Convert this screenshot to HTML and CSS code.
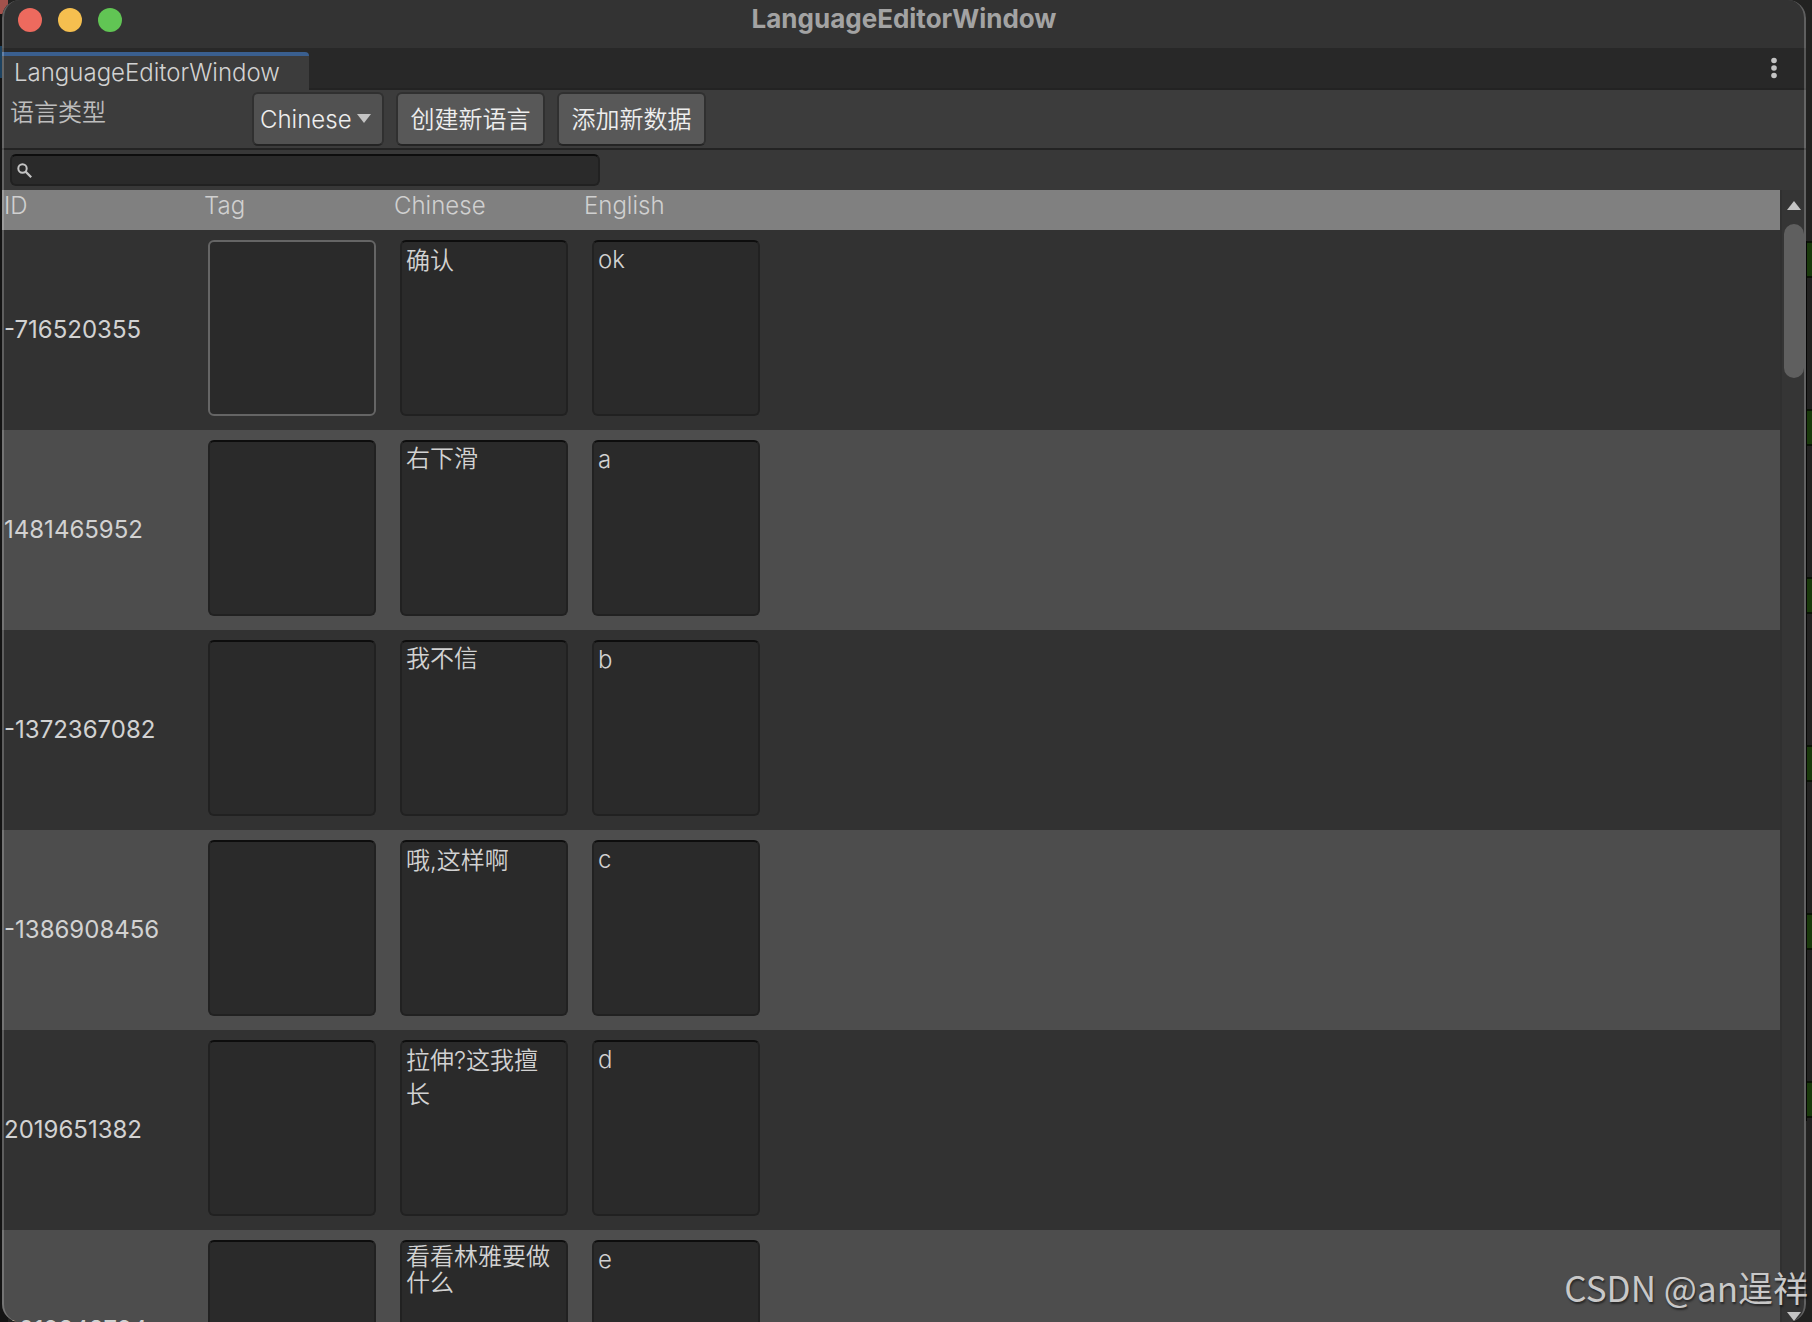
FILE: index.html
```html
<!DOCTYPE html>
<html lang="zh-CN">

<head>
    <meta charset="UTF-8">
    <meta name="viewport" content="width=device-width, initial-scale=1.0">
    <title>LanguageEditorWindow</title>
    <link rel="stylesheet" href="styles.css">
</head>

<body>
    <div class="window">
        <header class="title-bar">
            <div class="lights">
                <span class="light red"></span>
                <span class="light yellow"></span>
                <span class="light green"></span>
            </div>
            <h1>LanguageEditorWindow</h1>
        </header>

        <nav class="tab-bar">
            <button class="tab" type="button">LanguageEditorWindow</button>
            <button class="menu" type="button" aria-label="Menu">
                <svg width="6" height="22" viewBox="0 0 6 22" fill="#c4c4c4">
                    <circle cx="3" cy="3.5" r="2.8" />
                    <circle cx="3" cy="11" r="2.8" />
                    <circle cx="3" cy="18.5" r="2.8" />
                </svg>
            </button>
        </nav>

        <div class="toolbar">
            <label class="toolbar-label" for="language">语言类型</label>
            <div class="dropdown">
                <select id="language">
                    <option>Chinese</option>
                    <option>English</option>
                </select>
                <svg class="arrow" width="14" height="9" viewBox="0 0 14 9" fill="#c4c4c4">
                    <path d="M0 0h14L7 9z" />
                </svg>
            </div>
            <button class="button" type="button">创建新语言</button>
            <button class="button" type="button">添加新数据</button>
        </div>

        <div class="search-bar">
            <label class="search">
                <svg width="16" height="16" viewBox="0 0 16 16" fill="none" stroke="#c4c4c4" stroke-width="2">
                    <circle cx="5.5" cy="6.5" r="4.2" />
                    <path d="M8.6 9.6L14.2 15.2" stroke-width="2.2" />
                </svg>
                <input type="text" aria-label="Search">
            </label>
        </div>

        <main class="content">
            <table>
                <thead>
                    <tr><th class="id">ID</th><th>Tag</th><th>Chinese</th><th>English</th></tr>
                </thead>
                <tbody>
                    <tr>
                        <td class="id">-716520355</td>
                        <td><textarea class="active" aria-label="Tag"></textarea></td>
                        <td><textarea class="tall" aria-label="Chinese">确认</textarea></td>
                        <td><textarea aria-label="English">ok</textarea></td>
                    </tr>
                    <tr>
                        <td class="id">1481465952</td>
                        <td><textarea aria-label="Tag"></textarea></td>
                        <td><textarea class="medium" aria-label="Chinese">右下滑</textarea></td>
                        <td><textarea aria-label="English">a</textarea></td>
                    </tr>
                    <tr>
                        <td class="id">-1372367082</td>
                        <td><textarea aria-label="Tag"></textarea></td>
                        <td><textarea class="medium" aria-label="Chinese">我不信</textarea></td>
                        <td><textarea aria-label="English">b</textarea></td>
                    </tr>
                    <tr>
                        <td class="id">-1386908456</td>
                        <td><textarea aria-label="Tag"></textarea></td>
                        <td><textarea class="tall" aria-label="Chinese">哦,这样啊</textarea></td>
                        <td><textarea aria-label="English">c</textarea></td>
                    </tr>
                    <tr>
                        <td class="id">2019651382</td>
                        <td><textarea aria-label="Tag"></textarea></td>
                        <td><textarea class="tall" aria-label="Chinese">拉伸?这我擅长</textarea></td>
                        <td><textarea aria-label="English">d</textarea></td>
                    </tr>
                    <tr>
                        <td class="id">2019348794</td>
                        <td><textarea aria-label="Tag"></textarea></td>
                        <td><textarea class="compact" aria-label="Chinese">看看林雅要做什么</textarea></td>
                        <td><textarea aria-label="English">e</textarea></td>
                    </tr>
                </tbody>
            </table>
            <div class="scrollbar">
                <svg width="14" height="9" viewBox="0 0 14 9" fill="#c4c4c4">
                    <path d="M0 9h14L7 0z" />
                </svg>
                <div class="thumb"></div>
                <svg class="down" width="14" height="9" viewBox="0 0 14 9" fill="#c4c4c4">
                    <path d="M0 0h14L7 9z" />
                </svg>
            </div>
        </main>
    </div>
    <div class="backdrop"></div>

    <p class="watermark">CSDN @an逞祥</p>
</body>

</html>
```

FILE: styles.css
```css
* {
    box-sizing: border-box;
}

body {
    display: flex;
    height: 100vh;
    margin: 0;
    padding-left: 2px;
    overflow: hidden;
    background: linear-gradient(#a3524c 14px, #141414 14px 46px, #1d4260 46px 78px, #141414 78px) left / 8px 100% no-repeat #222221;
    color: #d2d2d2;
    font-family: Inter, "Noto Sans CJK SC", sans-serif;
    font-size: 24px;
    font-weight: 350;
}

button,
select,
input,
textarea {
    color: inherit;
    font: inherit;
}

.window {
    position: relative;
    display: flex;
    flex: 1;
    flex-direction: column;
    overflow: hidden;
    border-radius: 18px;
    background-color: #383838;
}

/* light rim over the window edge */
.window::after {
    content: "";
    position: absolute;
    inset: 0;
    border: solid rgba(255, 255, 255, 0.22);
    border-width: 0 2px;
    border-radius: 18px;
    pointer-events: none;
}

/* strip of the window behind */
.backdrop {
    width: 6px;
    height: 880px;
    margin-top: 241px;
    border-left: 1px solid #050505;
    background: linear-gradient(#0b1407 2px, #1a3a0c 2px 35px, #0b1407 35px 37px, transparent 37px) 0 0 / 5px 168px repeat-y;
}

.title-bar {
    display: grid;
    grid-template-columns: 1fr auto 1fr;
    height: 48px;
    padding: 0 16px 8px;
    align-items: center;
    background-color: #333333;
}

.title-bar h1 {
    margin: 0;
    padding-bottom: 2px;
    color: #a3a3a3;
    font-size: 26px;
    font-weight: 700;
    line-height: 30px;
}

.lights {
    display: flex;
    gap: 16px;
}

.light {
    width: 24px;
    height: 24px;
    border-radius: 50%;
}

.red {
    background-color: #ed6a5e;
}

.yellow {
    background-color: #f5bf4f;
}

.green {
    background-color: #61c554;
}

.tab-bar {
    display: flex;
    height: 42px;
    padding-top: 4px;
    justify-content: space-between;
    background-color: #282828;
    box-shadow: inset 0 -2px #232323;
}

.tab {
    width: 307px;
    padding: 0 12px 2px;
    border: none;
    border-top: 4px solid #3a5f8f;
    border-radius: 0 4px 0 0;
    background-color: #3c3c3c;
    text-align: left;
}

.menu {
    padding: 0 29px 6px;
    border: none;
    background: none;
}

.menu svg {
    display: block;
}

.toolbar {
    display: flex;
    height: 60px;
    padding: 2px 8px;
    gap: 12px;
    border-bottom: 2px solid #232323;
    background-color: #3c3c3c;
}

.toolbar-label {
    width: 230px;
    color: #bdbdbd;
    line-height: 42px;
}

.dropdown {
    position: relative;
}

.dropdown select,
.button {
    height: 54px;
    border: 2px solid #303030;
    border-bottom-color: #242424;
    border-radius: 6px;
    background-color: #585858;
    color: #eeeeee;
}

.dropdown select {
    width: 132px;
    padding: 0 6px;
    appearance: none;
    background-color: #515151;
}

.dropdown .arrow {
    position: absolute;
    top: 22px;
    right: 13px;
    pointer-events: none;
}

.button {
    width: 149px;
    padding: 0 0 4px;
}

.search-bar {
    height: 40px;
    padding: 4px 8px;
}

.search {
    display: flex;
    width: 590px;
    height: 32px;
    padding: 0 5px;
    align-items: center;
    gap: 8px;
    border: 2px solid #212121;
    border-top-color: #0d0d0d;
    border-radius: 6px;
    background-color: #2a2a2a;
}

.search input {
    flex: 1;
    padding: 0;
    border: none;
    outline: none;
    background: none;
}

.content {
    display: flex;
    flex: 1;
    min-height: 0;
}

table {
    display: block;
    flex: 1;
    overflow: hidden;
}

thead,
tbody {
    display: block;
}

tr {
    display: flex;
}

thead tr {
    height: 40px;
    background-color: #808080;
}

th {
    width: 190px;
    padding: 0 2px;
    color: #d0d0d0;
    font-weight: 350;
    line-height: 32px;
    text-align: left;
}

tbody tr {
    height: 200px;
    align-items: center;
    background-color: #323232;
}

tbody tr:nth-child(even) {
    background-color: #4d4d4d;
}

td {
    width: 192px;
    padding: 0 6px 4px;
}

.id {
    width: 200px;
    padding: 0 2px;
}

td.id {
    padding-bottom: 2px;
    font-weight: 400;
}

textarea {
    display: block;
    width: 168px;
    height: 176px;
    padding: 2px 8px 2px 4px;
    overflow: hidden;
    resize: none;
    border: 2px solid #212121;
    border-top-color: #0d0d0d;
    border-radius: 6px;
    outline: none;
    background-color: #2a2a2a;
    line-height: 32px;
}

textarea.tall {
    line-height: 34px;
}

textarea.medium {
    line-height: 30px;
}

textarea.compact {
    line-height: 26px;
}

textarea.active {
    border-color: #656565;
}

.scrollbar {
    display: flex;
    width: 26px;
    padding: 11px 2px 1px;
    flex-direction: column;
    align-items: center;
    border-left: 2px solid #303030;
    background-color: #353535;
}

.thumb {
    width: 20px;
    height: 154px;
    margin-top: 14px;
    border-radius: 10px;
    background-color: #5f5f5f;
}

.scrollbar .down {
    margin-top: auto;
}

.watermark {
    position: absolute;
    right: 4px;
    bottom: 10px;
    margin: 0;
    color: #c8c8c8;
    font-family: "Noto Sans CJK SC", sans-serif;
    font-size: 35px;
    font-weight: 400;
    line-height: 50px;
    text-shadow: 1px 2px 2px rgba(0, 0, 0, 0.5);
}
```
